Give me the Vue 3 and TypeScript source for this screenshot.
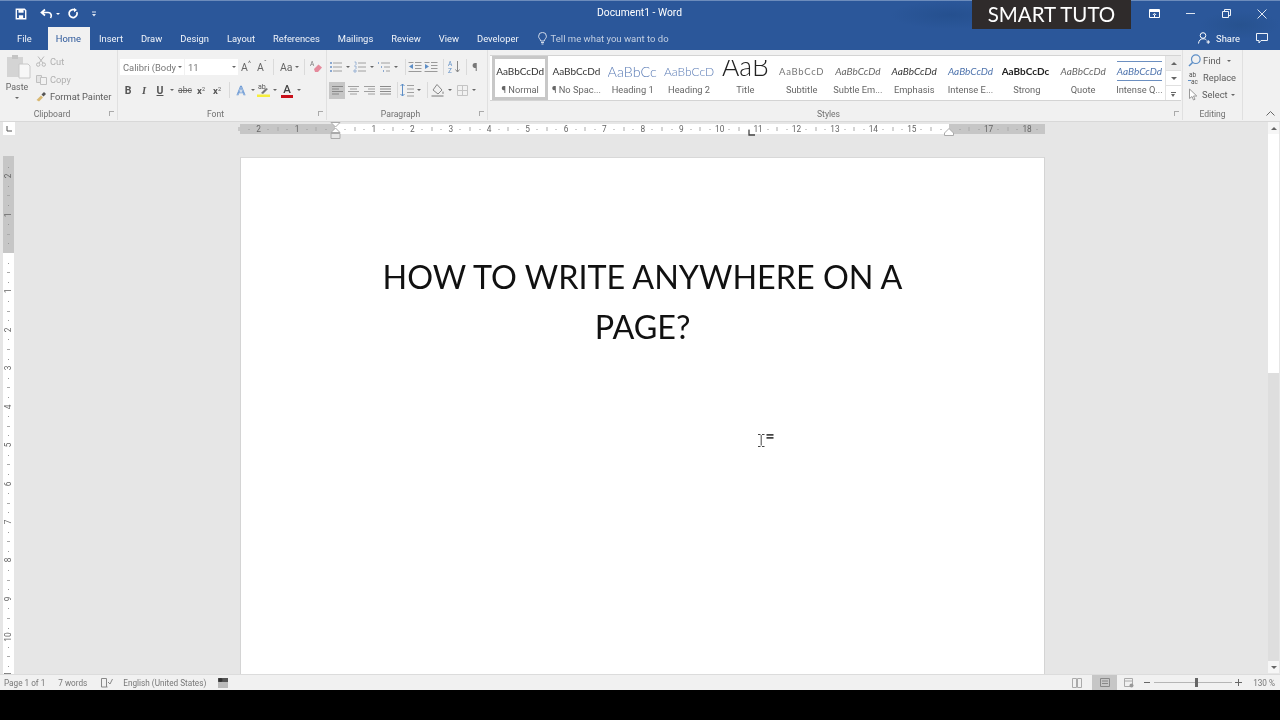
<script setup lang="ts">
const U = 38.42
const hMarks: { left: number; kind: string; label: string }[] = []
for (let i = -10; i <= 73; i++) {
  const p = i / 4
  const left = 95.5 + p * U
  if (i === 0 || i === 64) continue
  if (i % 4 === 0) hMarks.push({ left, kind: 'num', label: String(Math.abs(p)) })
  else if (Math.abs(i % 2) === 1) hMarks.push({ left, kind: 'dot', label: '' })
  else hMarks.push({ left, kind: 'tick', label: '' })
}
const vMarks: { top: number; kind: string; label: string }[] = []
for (let i = -9; i <= 44; i++) {
  const p = i / 4
  const top = 97 + p * U
  if (i === 0) continue
  if (i % 4 === 0) vMarks.push({ top, kind: 'num', label: String(Math.abs(p)) })
  else if (Math.abs(i % 2) === 1) vMarks.push({ top, kind: 'dot', label: '' })
  else vMarks.push({ top, kind: 'tick', label: '' })
}
const tabs = ['Insert', 'Draw', 'Design', 'Layout', 'References', 'Mailings', 'Review', 'View', 'Developer']
const styles = [
  { sample: 'AaBbCcDd', name: '¶ Normal', cls: 's-normal', active: true },
  { sample: 'AaBbCcDd', name: '¶ No Spac...', cls: 's-normal', active: false },
  { sample: 'AaBbCc', name: 'Heading 1', cls: 's-h1', active: false },
  { sample: 'AaBbCcD', name: 'Heading 2', cls: 's-h2', active: false },
  { sample: 'AaB', name: 'Title', cls: 's-title', active: false },
  { sample: 'AaBbCcD', name: 'Subtitle', cls: 's-sub', active: false },
  { sample: 'AaBbCcDd', name: 'Subtle Em...', cls: 's-sem', active: false },
  { sample: 'AaBbCcDd', name: 'Emphasis', cls: 's-em', active: false },
  { sample: 'AaBbCcDd', name: 'Intense E...', cls: 's-ie', active: false },
  { sample: 'AaBbCcDc', name: 'Strong', cls: 's-strong', active: false },
  { sample: 'AaBbCcDd', name: 'Quote', cls: 's-sem', active: false },
  { sample: 'AaBbCcDd', name: 'Intense Q...', cls: 's-iq', active: false }
]
</script>

<template>
  <div class="app">
    <header class="head">
      <div class="titlebar">
        <div class="qat">
          <svg class="q-save" width="12" height="12" viewBox="0 0 14 14"><path d="M1.500 1.500h9.500l1.500 1.500V12.500h-11z" fill="none" stroke="#fff" stroke-width="1.600"/><path d="M4 2h6v3.500H4z" fill="#fff"/><path d="M4.500 8.500h5v3.500h-5z" fill="#fff"/></svg>
          <svg class="q-undo" width="13" height="12" viewBox="0 0 13 12"><path d="M5 1.500 1.500 4.500 5 7.500M2 4.500h6a3.300 3.300 0 0 1 2.500 5.500" fill="none" stroke="#fff" stroke-width="1.700"/></svg>
          <span class="caret white q-c"></span>
          <svg class="q-redo" width="12" height="12" viewBox="0 0 12 12"><path d="M8 1.600H5.500A4 4 0 1 0 9.800 4" fill="none" stroke="#fff" stroke-width="1.700"/><path d="M7 0 10 2 7 4.200z" fill="#fff"/></svg>
          <svg class="q-more" width="5" height="6" viewBox="0 0 5 6"><path d="M0 .5h4v1H0zM0 3h4L2 5.500z" fill="#dfe6f1"/></svg>
        </div>
        <div class="doc-title">Document1 - Word</div>
        <div class="win">
          <svg class="w-rib" width="11" height="10" viewBox="0 0 11 10"><path d="M.5.500h10v8H.5z" fill="none" stroke="#fff"/><path d="M1 1h9v2H1zM5.500 4 3.500 6h4zM5 5.500h1V8H5z" fill="#fff"/></svg>
          <svg class="w-min" width="9" height="1" viewBox="0 0 9 1"><path d="M0 0h9v1H0z" fill="#dfe6f1"/></svg>
          <svg class="w-max" width="9" height="9" viewBox="0 0 9 9"><path d="M.5 2.500h6v6h-6zM2.500 2.500v-2h6v6h-2" fill="none" stroke="#eef2f8"/></svg>
          <svg class="w-close" width="10" height="10" viewBox="0 0 10 10"><path d="M.5.500l9 9M9.500.500l-9 9" stroke="#dfe6f1" fill="none"/></svg>
        </div>
      </div>
      <nav class="tabs">
        <span class="tab file">File</span>
        <span class="tab home">Home</span>
        <span v-for="t in tabs" :key="t" class="tab">{{ t }}</span>
        <svg class="bulb" width="9" height="13" viewBox="0 0 9 13"><path d="M2.800 9C2.500 7 .6 6.500.6 4.300a3.900 3.900 0 0 1 7.800 0C8.400 6.500 6.500 7 6.200 9zM3 10.500h3M3.500 12h2" fill="none" stroke="#e3e9f3" stroke-width=".9"/></svg>
        <span class="tell">Tell me what you want to do</span>
        <span class="spacer"></span>
        <svg class="sh-ic" width="12" height="12" viewBox="0 0 12 12"><circle cx="5" cy="3.500" r="2.800" fill="none" stroke="#fff"/><path d="M.5 11.500C.8 8.500 2.500 6.800 5 6.800s3 .7 3.500 1.500M8.500 10h3.500M10.200 8.200v3.600" fill="none" stroke="#fff"/></svg>
        <span class="share">Share</span>
        <svg class="comment" width="12" height="11" viewBox="0 0 12 11"><path d="M.5.500h11v7H5L3 10V7.500H.5z" fill="none" stroke="#eef2f8"/></svg>
      </nav>
      <div class="badge">SMART TUTO</div>
    </header>

    <section class="ribbon">
      <div class="group g-clip">
        <div class="clip-body">
          <div class="paste">
            <svg width="26" height="26" viewBox="0 0 26 26"><path d="M1 3h16v20H1z" fill="#d4d4d4"/><path d="M6 1h6v4H6z" fill="#c4c4c4"/><path d="M13 10h9l2 2v12H13z" fill="#f7f7f7" stroke="#c8c8c8"/></svg>
            <span class="paste-t">Paste</span>
            <span class="caret"></span>
          </div>
          <div class="clip-list">
            <div class="clip-row off">
              <svg width="10" height="11" viewBox="0 0 10 11"><path d="M2 .5 7 7M8 .5 3 7" stroke="#b8b8b8" fill="none"/><circle cx="2.200" cy="8.600" r="1.700" fill="none" stroke="#b8b8b8"/><circle cx="7.800" cy="8.600" r="1.700" fill="none" stroke="#b8b8b8"/></svg>
              <span>Cut</span>
            </div>
            <div class="clip-row off">
              <svg width="11" height="11" viewBox="0 0 11 11"><path d="M.5 1.500h5v7h-5z" fill="#e5e5e5" stroke="#c0c0c0"/><path d="M4.500 3.500h6v7h-6z" fill="#f2f2f2" stroke="#c0c0c0"/></svg>
              <span>Copy</span>
            </div>
            <div class="clip-row">
              <svg width="11" height="11" viewBox="0 0 11 11"><path d="M.5 9 5 4.500 7 6.500 3 10.500z" fill="#d9b872"/><path d="M5.500 3.500 8 1l2 2-2.500 2.500z" fill="#555"/></svg>
              <span>Format Painter</span>
            </div>
          </div>
        </div>
        <div class="glabel">Clipboard<i class="launch"></i></div>
      </div>

      <div class="group g-font">
        <div class="rows">
          <div class="row">
            <div class="combo c-name"><span>Calibri (Body</span><b class="caret"></b></div>
            <div class="combo c-size"><span>11</span><b class="caret"></b></div>
            <span class="t t-grow">A<sup>^</sup></span>
            <span class="t t-shrink">A<sup>ˇ</sup></span>
            <span class="vsep s1"></span>
            <span class="t t-aa">Aa</span><span class="caret aa-c"></span>
            <span class="vsep s2"></span>
            <svg class="t-clear" width="13" height="14" viewBox="0 0 13 14"><text x="0" y="6" font-size="6.500" fill="#777" font-family="Roboto">A</text><path d="M4 9 8.500 4.500l3.500 3L8 12H5z" fill="#e58a9c"/></svg>
          </div>
          <div class="row r2">
            <span class="t fmt b">B</span>
            <span class="t fmt i">I</span>
            <span class="t fmt u">U</span>
            <span class="cw"><span class="caret"></span></span>
            <span class="t fmt abc">abc</span>
            <span class="t fmt xs">x<sub>2</sub></span>
            <span class="t fmt xs">x<sup>2</sup></span>
            <span class="vsep s3"></span>
            <span class="t fmt ta">A</span>
            <span class="cw"><span class="caret"></span></span>
            <svg class="hl" width="16" height="16" viewBox="0 0 16 16"><text x="2" y="7" font-size="7" fill="#555" font-family="Roboto">ab</text><path d="M5 11 10 6l2 1-5 5z" fill="#777"/><path d="M1 12.500h13V15H1z" fill="#f6ee3c"/></svg>
            <span class="cw c6"><span class="caret"></span></span>
            <span class="t fmt fc">A</span>
            <span class="cw"><span class="caret"></span></span>
          </div>
        </div>
        <div class="glabel">Font<i class="launch"></i></div>
      </div>

      <div class="group g-para">
        <div class="rows">
          <div class="row">
            <svg class="pi" width="14" height="12" viewBox="0 0 14 12"><path d="M4 2h9M4 6h9M4 10h9" stroke="#a0a0a0"/><path d="M1 1h2v2H1zM1 5h2v2H1zM1 9h2v2H1z" fill="#8aa8d0"/></svg><span class="cw c9"><span class="caret"></span></span>
            <svg class="pi" width="14" height="12" viewBox="0 0 14 12"><path d="M5 2h8M5 6h8M5 10h8" stroke="#a0a0a0"/><path d="M1.500 1h1.500v3M1 5h2v3M1 9h2v2H1z" stroke="#8aa8d0" fill="none" stroke-width=".8"/></svg><span class="cw c9"><span class="caret"></span></span>
            <svg class="pi" width="14" height="12" viewBox="0 0 14 12"><path d="M4 2h9M7 6h6M9 10h4" stroke="#a0a0a0"/><path d="M1 1h1v2H1zM4 5h1v2H4zM6 9h1v2H6z" fill="#8aa8d0"/></svg><span class="cw c9"><span class="caret"></span></span>
            <span class="vsep s4"></span>
            <svg class="pi p16" width="14" height="12" viewBox="0 0 14 12"><path d="M7 1.500h6.500M7 4.500h6.500M7 7.500h6.500M.5 10.500h13M.5 1.500h5" stroke="#9a9a9a"/><path d="M5 3v5L1 5.500z" fill="#5d8ec6"/></svg>
            <svg class="pi p16" width="14" height="12" viewBox="0 0 14 12"><path d="M7 1.500h6.500M7 4.500h6.500M7 7.500h6.500M.5 10.500h13M.5 1.500h5" stroke="#9a9a9a"/><path d="M1 3v5l4-2.500z" fill="#5d8ec6"/></svg>
            <span class="vsep s5"></span>
            <svg class="pi p-sort" width="13" height="14" viewBox="0 0 13 14"><text x="0" y="6" font-size="6.500" fill="#5d8ec6" font-family="Roboto">A</text><text x="0" y="13" font-size="6.500" fill="#5d8ec6" font-family="Roboto">Z</text><path d="M9.500 1v11M7.500 9.500l2 2.500 2-2.500" fill="none" stroke="#888"/></svg>
            <span class="vsep s6"></span>
            <span class="t pil">¶</span>
          </div>
          <div class="row r2">
            <span class="align on"><svg width="11" height="9" viewBox="0 0 11 9"><path d="M0 .5h11M0 3h7M0 5.500h11M0 8h7" stroke="#888"/></svg></span>
            <span class="align"><svg width="11" height="9" viewBox="0 0 11 9"><path d="M0 .5h11M2 3h7M0 5.500h11M2 8h7" stroke="#a0a0a0"/></svg></span>
            <span class="align"><svg width="11" height="9" viewBox="0 0 11 9"><path d="M0 .5h11M4 3h7M0 5.500h11M4 8h7" stroke="#a0a0a0"/></svg></span>
            <span class="align"><svg width="11" height="9" viewBox="0 0 11 9"><path d="M0 .5h11M0 3h11M0 5.500h11M0 8h11" stroke="#8a8a8a"/></svg></span>
            <span class="vsep s7"></span>
            <svg class="p-sp" width="14" height="14" viewBox="0 0 14 14"><path d="M2.500 1v12M.5 3l2-2 2 2M.5 11l2 2 2-2" fill="none" stroke="#5d8ec6"/><path d="M7 2.500h7M7 6h7M7 9.500h7M7 13h7" stroke="#a0a0a0"/></svg>
            <span class="cw c8"><span class="caret"></span></span>
            <span class="vsep s8"></span>
            <svg class="p-fill" width="14" height="14" viewBox="0 0 14 14"><path d="M6 1.500 11 7l-4 4-5-4z" fill="none" stroke="#888"/><path d="M12 8c1 1.500 1 3 0 3s-1-1.500 0-3z" fill="#999"/><path d="M.5 13h12" stroke="#777"/></svg>
            <span class="cw c8"><span class="caret"></span></span>
            <svg class="p-bord" width="11" height="11" viewBox="0 0 11 11"><path d="M.5.500h10v10H.5zM5.500.500v10M.5 5.500h10" fill="none" stroke="#c4c4c4"/></svg>
            <span class="cw c8b"><span class="caret"></span></span>
          </div>
        </div>
        <div class="glabel">Paragraph<i class="launch"></i></div>
      </div>

      <div class="group g-styles">
        <div class="gallery">
          <div class="items">
            <div v-for="s in styles" :key="s.name" class="style" :class="{ active: s.active }">
              <div class="sample" :class="s.cls"><span>{{ s.sample }}</span></div>
              <div class="sname">{{ s.name }}</div>
            </div>
          </div>
          <div class="gscroll">
            <span class="gs off"><i class="up"></i></span>
            <span class="gs"><i class="down"></i></span>
            <span class="gs last"><i class="more"></i></span>
          </div>
        </div>
        <div class="glabel">Styles<i class="launch"></i></div>
      </div>

      <div class="group g-edit">
        <div class="edit-list">
          <div class="edit-row">
            <svg width="13" height="13" viewBox="0 0 13 13"><circle cx="7.800" cy="5.200" r="4.300" fill="none" stroke="#5d8ec6" stroke-width="1.200"/><path d="M4.800 8.200 1 12" stroke="#5d8ec6" stroke-width="1.500"/></svg>
            <span>Find</span><b class="caret"></b>
          </div>
          <div class="edit-row">
            <svg width="12" height="13" viewBox="0 0 12 13"><text x="1" y="6" font-size="6.500" fill="#555" font-family="Roboto">ab</text><text x="3" y="12.500" font-size="6.500" fill="#555" font-family="Roboto">ac</text><path d="M0 9.500h3" stroke="#5d8ec6"/></svg>
            <span>Replace</span>
          </div>
          <div class="edit-row">
            <svg width="11" height="13" viewBox="0 0 11 13"><path d="M1.500 1v9.500l2.500-2 1.500 3.500 1.500-.7-1.500-3.300h3.300z" fill="#fff" stroke="#999"/></svg>
            <span>Select</span><b class="caret"></b>
          </div>
        </div>
        <div class="glabel">Editing</div>
      </div>
      <svg class="collapse" width="9" height="5" viewBox="0 0 9 5"><path d="M.5 4.500l4-4 4 4" fill="none" stroke="#666"/></svg>
    </section>

    <main class="workspace">
      <div class="canvas">
        <div class="ruler-row">
          <div class="tabstop"><svg width="6" height="6" viewBox="0 0 6 6"><path d="M1 0v5h5" fill="none" stroke="#555"/></svg></div>
          <div class="hruler">
            <div class="h-white"></div>
            <template v-for="(m, i) in hMarks" :key="i">
              <span class="hm" :class="m.kind" :style="{ left: m.left + 'px' }">{{ m.label }}</span>
            </template>
            <svg class="ind-left" width="11" height="18" viewBox="0 0 11 18"><path d="M1 .5h9L5.500 5zM5.500 6 10 10.500H1z" fill="#fff" stroke="#aaa"/><path d="M1 11.500h9v5H1z" fill="#e6e6e6" stroke="#aaa"/></svg>
            <svg class="ind-right" width="10" height="8" viewBox="0 0 10 8"><path d="M5 .5 9.500 5v2.500H.5V5z" fill="#fff" stroke="#aaa"/></svg>
            <svg class="tab-mark" width="7" height="6" viewBox="0 0 7 6"><path d="M1 0v5h6" fill="none" stroke="#444" stroke-width="1.300"/></svg>
          </div>
        </div>
        <div class="doc-row">
          <div class="vruler">
            <div class="v-grey"></div>
            <span v-for="(m, i) in vMarks" :key="i" class="vm" :class="m.kind" :style="{ top: m.top + 'px' }">{{ m.label }}</span>
          </div>
          <article class="page">
            <h1 class="doc-h">HOW TO WRITE ANYWHERE ON A PAGE?</h1>
            <svg class="ibeam" width="18" height="14" viewBox="0 0 18 14"><path d="M1 .5h2.500M5 .5H7.500M4.200 1v10.500M1 12.500h2.500M5 12.500h2.500" fill="none" stroke="#444"/><path d="M9.500 0h7v1.800h-7zM9.500 3h7v1.800h-7z" fill="#444"/></svg>
          </article>
        </div>
      </div>
      <aside class="vscroll">
        <span class="sb-btn"><i class="up"></i></span>
        <span class="sb-thumb"></span>
        <span class="sb-track"></span>
        <span class="sb-btn"><i class="down"></i></span>
      </aside>
    </main>

    <footer class="status">
      <span class="st-page">Page 1 of 1</span>
      <span class="st-words">7 words</span>
      <svg class="st-proof" width="12" height="10" viewBox="0 0 12 10"><path d="M.5.500H5.500v8.500H.5zM5.500 9h1" fill="none" stroke="#888"/><path d="M7 4l2 2 2.500-5" fill="none" stroke="#888"/></svg>
      <span class="st-lang">English (United States)</span>
      <svg class="st-macro" width="10" height="10" viewBox="0 0 10 10"><path d="M0 0h10v4H0z" fill="#555"/><path d="M0 4h10v6H0z" fill="#bbb"/><circle cx="2.500" cy="2" r="2" fill="#333"/></svg>
      <span class="spacer"></span>
      <svg class="v-read" width="10" height="10" viewBox="0 0 10 10"><path d="M.5.500h4v9h-4zM5.500.500h4v9h-4z" fill="none" stroke="#aaa"/></svg>
      <span class="v-print"><svg width="10" height="9" viewBox="0 0 10 9"><path d="M.5.500h9v8h-9zM2 3h6M2 5.500h6" fill="none" stroke="#888"/></svg></span>
      <svg class="v-web" width="10" height="10" viewBox="0 0 10 10"><path d="M.5.500h8v8h-8zM.5 3h8" fill="none" stroke="#aaa"/><circle cx="7.500" cy="7.500" r="2" fill="#999"/></svg>
      <span class="z-minus"></span>
      <div class="slider"><i></i></div>
      <span class="z-plus"></span>
      <span class="st-zoom">130 %</span>
    </footer>
    <div class="letterbox"></div>
  </div>
</template>

<style>
html, body { margin: 0; background: #000; }
</style>

<style scoped>
.app {
  width: 1280px; height: 720px; overflow: hidden; display: flex; flex-direction: column;
  font-family: Roboto, "Noto Sans", sans-serif; color: #5a5a5a; background: #000;
  filter: blur(.4px);
}
.spacer { flex: 1; }

.head {
  position: relative; height: 50px; flex: none;
  border-top: 1px solid #6c8cbc; box-sizing: border-box;
  background:
    radial-gradient(ellipse 60px 14px at 950px 14px, #25508f, transparent),
    radial-gradient(ellipse 40px 14px at 1240px 24px, #27528f, transparent),
    #2b579a;
}
.titlebar { height: 25px; display: flex; align-items: center; position: relative; }
.qat { display: flex; align-items: center; padding-left: 15px; }
.q-undo { margin-left: 13px; }
.q-c { margin-left: 3px; }
.q-redo { margin-left: 7px; }
.q-more { margin-left: 13px; }
.doc-title { position: absolute; left: 597px; top: 5px; font-size: 10.300px; line-height: 14px; color: #fff; white-space: nowrap; }
.win { margin-left: auto; display: flex; align-items: center; }
.w-rib { margin-right: 26px; }
.w-min { margin-right: 27px; }
.w-max { margin-right: 26px; }
.w-close { margin-right: 13px; }

.tabs { height: 24px; display: flex; align-items: flex-end; color: #fff; font-size: 9.400px; padding-left: 8px; }
.tab { padding: 1px 9px 0; line-height: 22px; color: #f2f5fa; white-space: nowrap; }
.tab.file { padding-right: 8px; margin-right: 8px; }
.tab.home { background: #f1f1f1; color: #2b579a; padding: 1px 9px 0 8px; }
.bulb { margin: 0 4px 5px 10px; }
.tell { padding-top: 1px; line-height: 22px; color: #c3cfe2; font-size: 9.500px; }
.sh-ic { margin: 0 6px 6px 0; }
.share { padding-top: 1px; line-height: 22px; color: #fff; margin-right: 16px; }
.comment { margin: 0 12px 6px 0; }
.badge {
  position: absolute; left: 972px; top: -1px; width: 159px; height: 29px; background: #2f2b2b;
  color: #fff; font-family: Lato, sans-serif; font-size: 20.500px; line-height: 29px; text-align: center;
}

.ribbon {
  position: relative; height: 72px; flex: none; display: flex; background: #f1f1f1;
  border-bottom: 1px solid #d8d8d8; box-sizing: border-box; font-size: 9.300px; color: #5e5e5e;
}
.group { position: relative; display: flex; flex-direction: column; box-sizing: border-box; border-right: 1px solid #e0e0e0; margin-bottom: 1px; }
.glabel { position: absolute; left: 0; right: 0; bottom: 0; height: 12px; line-height: 12px; text-align: center; font-size: 8.600px; color: #707070; padding-right: 13px; box-sizing: border-box; }
.g-edit .glabel { padding-right: 0; }
.launch {
  position: absolute; right: 3px; top: 3px; width: 5px; height: 5px; border-left: 1px solid #aaa; border-top: 1px solid #aaa; box-sizing: border-box;
}
.caret { display: inline-block; width: 0; height: 0; border-left: 2px solid transparent; border-right: 2px solid transparent; border-top: 2px solid #666; }
.caret.white { border-top-color: #fff; }

.g-clip { width: 118px; }
.clip-body { display: flex; }
.paste { width: 34px; display: flex; flex-direction: column; align-items: center; padding-top: 4px; }
.paste svg { margin-left: 4px; }
.paste-t { font-size: 8.800px; line-height: 12px; margin-top: 1px; color: #666; }
.paste .caret { margin-top: 4px; }
.clip-list { display: flex; flex-direction: column; padding-top: 3px; }
.clip-row { display: flex; align-items: center; height: 17.500px; white-space: nowrap; font-size: 9.300px; color: #5c5c5c; gap: 3px; padding-left: 2px; }
.clip-row:nth-child(1) span { margin-left: 1px; }
.clip-row.off { color: #b0b0b0; }

.rows { display: flex; flex-direction: column; padding-top: 9px; gap: 7px; }
.row { display: flex; align-items: center; height: 16px; }
.t { display: inline-flex; justify-content: center; align-items: center; color: #666; }
.vsep { display: block; width: 1px; height: 16px; background: #dadada; flex: none; }
.cw { display: inline-flex; width: 8px; justify-content: center; flex: none; }

.g-font { width: 209px; padding-left: 2px; }
.combo { height: 16px; box-sizing: border-box; background: #fff; display: flex; align-items: center; padding-left: 3px; font-size: 9.400px; color: #777; white-space: nowrap; overflow: hidden; position: relative; }
.combo .caret { position: absolute; right: 2px; top: 7px; }
.c-name { width: 64px; }
.c-size { width: 53px; margin-left: 1px; }
.t-grow, .t-shrink { width: 16px; font-size: 10.500px; }
.t-grow sup, .t-shrink sup { font-size: 7px; line-height: 1; margin-top: -5px; }
.s1 { margin-left: 3px; margin-right: 6px; }
.t-aa { font-size: 10.500px; }
.aa-c { margin-left: 2px; }
.s2 { margin-left: 5px; margin-right: 5px; }
.fmt { width: 16px; font-size: 10.500px; color: #555; flex: none; }
.b { font-weight: 700; }
.i { font-style: italic; font-weight: 700; font-family: "Liberation Serif", serif; }
.u { font-weight: 700; text-decoration: underline; }
.abc { font-size: 8.500px; text-decoration: line-through; color: #666; margin-left: 1px; }
.xs { font-weight: 700; font-size: 9.500px; }
.xs sub, .xs sup { font-size: 5.500px; font-weight: 400; line-height: 1; }
.s3 { margin-left: 3.500px; margin-right: 3.500px; }
.ta { font-size: 13px; color: #e4edf8; -webkit-text-stroke: .7px #6f9bd4; }
.hl { margin-left: -1px; }
.c6 { width: 6px; }
.fc { font-size: 11.500px; font-weight: 500; color: #444; border-bottom: 3px solid #c8101a; line-height: 10px; height: 13px; width: 12px; margin: 0 2px 0 3px; box-sizing: content-box; }

.g-para { width: 161px; padding-left: 2px; }
.pi { flex: none; }
.c9 { width: 10px; }
.s4 { margin-left: 4px; margin-right: 2px; }
.p16 { margin-right: 2px; }
.s5 { margin-left: 3px; margin-right: 3.500px; }
.s6 { margin-left: 5.500px; margin-right: 4px; }
.pil { font-size: 11px; width: 8px; color: #777; }
.align { width: 16px; height: 17px; display: inline-flex; align-items: center; justify-content: center; flex: none; }
.align.on { background: #c6c6c6; }
.s7 { margin-left: 4px; margin-right: 2px; }
.c8 { width: 9px; }
.s8 { margin-left: 4px; margin-right: 3px; }
.p-bord { margin-left: 2.500px; flex: none; }
.c8b { width: 9px; margin-left: 2px; }

.g-styles { width: 695px; padding-left: 2px; }
.gallery { margin-top: 5px; height: 46px; width: 691px; display: flex; box-sizing: border-box; background: #fff; border-top: 1px solid #d4d4d4; border-bottom: 1px solid #d4d4d4; }
.items { display: flex; width: 676px; overflow: hidden; padding-left: 2px; box-sizing: border-box; }
.style { width: 56.300px; flex: none; box-sizing: border-box; overflow: hidden; text-align: center; }
.style.active { outline: 3px solid #c8c8c8; outline-offset: -3px; }
.sample { height: 28px; display: flex; align-items: center; justify-content: center; white-space: nowrap; overflow: hidden; margin: 0 3px; font-family: Lato, sans-serif; font-size: 10px; color: #333; padding-top: 2px; box-sizing: border-box; }
.sname { font-size: 9.300px; line-height: 12px; margin-top: 0; color: #666; white-space: nowrap; }
.s-h1 { font-size: 14.300px; color: #5a7bb5; justify-content: flex-start; font-weight: 300; }
.s-h2 { font-size: 12px; color: #5a7bb5; justify-content: flex-start; font-weight: 300; }
.sample.s-title { font-size: 26.500px; color: #222; font-weight: 300; height: 24px; margin-top: 4px; padding-top: 0; align-items: flex-start; overflow: hidden; }
.s-title span { display: block; line-height: 27px; margin-top: -7px; }
.s-sub { color: #777; letter-spacing: .7px; font-size: 9.500px; }
.s-sem { font-style: italic; color: #666; }
.s-em { font-style: italic; color: #333; }
.s-ie { font-style: italic; color: #4f74ad; }
.s-strong { font-weight: 700; color: #222; justify-content: flex-start; }
.s-iq { font-style: italic; color: #4f74ad; }
.s-iq span { border-top: 1px solid #6c8fc0; border-bottom: 1px solid #6c8fc0; padding: 3px 0; }
.gscroll { width: 15px; display: flex; flex-direction: column; border-left: 1px solid #e3e3e3; }
.gs { flex: 1; display: flex; align-items: center; justify-content: center; background: #fff; border-bottom: 1px solid #e0e0e0; }
.gs.off { background: #ececec; }
.gs.last { border-bottom: 0; }
i.up { width: 0; height: 0; border-left: 3px solid transparent; border-right: 3px solid transparent; border-bottom: 3px solid #666; }
i.down { width: 0; height: 0; border-left: 3px solid transparent; border-right: 3px solid transparent; border-top: 3px solid #666; }
i.more { width: 5px; height: 3px; border-top: 1px solid #666; position: relative; box-sizing: border-box; }
.gs i.more::after { content: ""; position: absolute; left: 0; top: 1px; border-left: 2.500px solid transparent; border-right: 2.500px solid transparent; border-top: 3px solid #666; }

.g-edit { width: 60px; padding-left: 5px; }
.edit-list { display: flex; flex-direction: column; padding-top: 2px; }
.edit-row { height: 17px; display: flex; align-items: center; gap: 3px; font-size: 9.300px; color: #5c5c5c; white-space: nowrap; }
.edit-row:nth-child(1) { gap: 2px; }
.edit-row .caret { margin-left: 4px; }
.edit-row:nth-child(3) .caret { margin-left: 0; }
.collapse { position: absolute; left: 1266px; top: 61px; }

.workspace { height: 552px; flex: none; display: flex; background: #e6e6e6; }
.canvas { flex: 1; display: flex; flex-direction: column; min-width: 0; overflow: hidden; }
.ruler-row { height: 16px; flex: none; display: flex; }
.tabstop { width: 12px; height: 13px; margin-left: 3px; background: #fff; display: flex; align-items: center; justify-content: center; }
.hruler { position: relative; width: 805px; height: 10px; margin: 2px 0 0 225px; background: #c6c6c6; font-size: 8.300px; color: #666; }
.h-white { position: absolute; left: 95px; width: 614px; top: 0; bottom: 0; background: #fff; }
.hm { position: absolute; top: 0; line-height: 10px; transform: translateX(-50%); }
.hm.dot { width: 1px; height: 1px; top: 5px; background: #999; }
.hm.tick { width: 1px; height: 4px; top: 3px; background: #aaa; }
.ind-left { position: absolute; left: 90px; top: -2px; }
.ind-right { position: absolute; left: 704px; top: 4px; }
.tab-mark { position: absolute; left: 508px; top: 6px; }

.doc-row { flex: 1; display: flex; min-height: 0; }
.vruler { position: relative; width: 11px; margin: 18px 0 0 3px; background: #fff; font-size: 8.300px; color: #666; overflow: hidden; }
.v-grey { position: absolute; left: 0; right: 0; top: 0; height: 97px; background: #c6c6c6; }
.vm { position: absolute; left: 0; width: 11px; text-align: center; line-height: 11px; transform: translateY(-50%) rotate(-90deg); }
.vm.dot { left: 5px; width: 1px; height: 1px; background: #999; transform: none; }
.vm.tick { left: 4px; width: 3px; height: 1px; background: #aaa; transform: none; }
.page {
  position: relative; width: 805px; margin: 19px 0 0 226px; padding: 94px 95px 0 95px; box-sizing: border-box;
  background: #fff; border-left: 1px solid #d4d4d4; border-right: 1px solid #d4d4d4; border-top: 1px solid #d8d8d8;
}
.doc-h { margin: 0; font-family: Lato, sans-serif; font-weight: 400; font-size: 32.300px; line-height: 50px; color: #111; text-align: center; }
.ibeam { position: absolute; left: 516px; top: 276px; }

.vscroll { width: 13px; flex: none; display: flex; flex-direction: column; padding: 0 1px 1px 1px; box-sizing: border-box; }
.sb-btn { height: 12px; flex: none; background: #f6f6f6; display: flex; align-items: center; justify-content: center; }
.sb-thumb { height: 239px; flex: none; background: #fff; }
.sb-track { flex: 1; background: #dedede; }

.status { height: 16px; flex: none; box-sizing: border-box; display: flex; align-items: center; background: #f1f1f1; border-top: 1px solid #dcdcdc; font-size: 8.200px; color: #777; white-space: nowrap; }
.st-page { margin-left: 4px; }
.st-words { margin-left: 13px; }
.st-proof { margin-left: 14px; }
.st-lang { margin-left: 10px; }
.st-macro { margin-left: 12px; }
.v-read { margin-right: 10px; }
.v-print { width: 25px; height: 15px; background: #c6c6c6; display: flex; align-items: center; justify-content: center; margin-right: 7px; }
.v-web { margin-right: 10px; }
.z-minus { width: 6px; height: 1.500px; background: #666; margin-right: 4px; }
.slider { position: relative; width: 78px; height: 1px; background: #b5b5b5; }
.slider i { position: absolute; left: 41px; top: -4px; width: 3px; height: 9px; background: #666; }
.z-plus { position: relative; width: 7px; height: 1.500px; background: #666; margin: 0 11px 0 3px; }
.z-plus::after { content: ""; position: absolute; left: 2.750px; top: -2.750px; width: 1.500px; height: 7px; background: #666; }
.st-zoom { margin-right: 5px; }
.letterbox { flex: 1; background: #000; }
</style>
